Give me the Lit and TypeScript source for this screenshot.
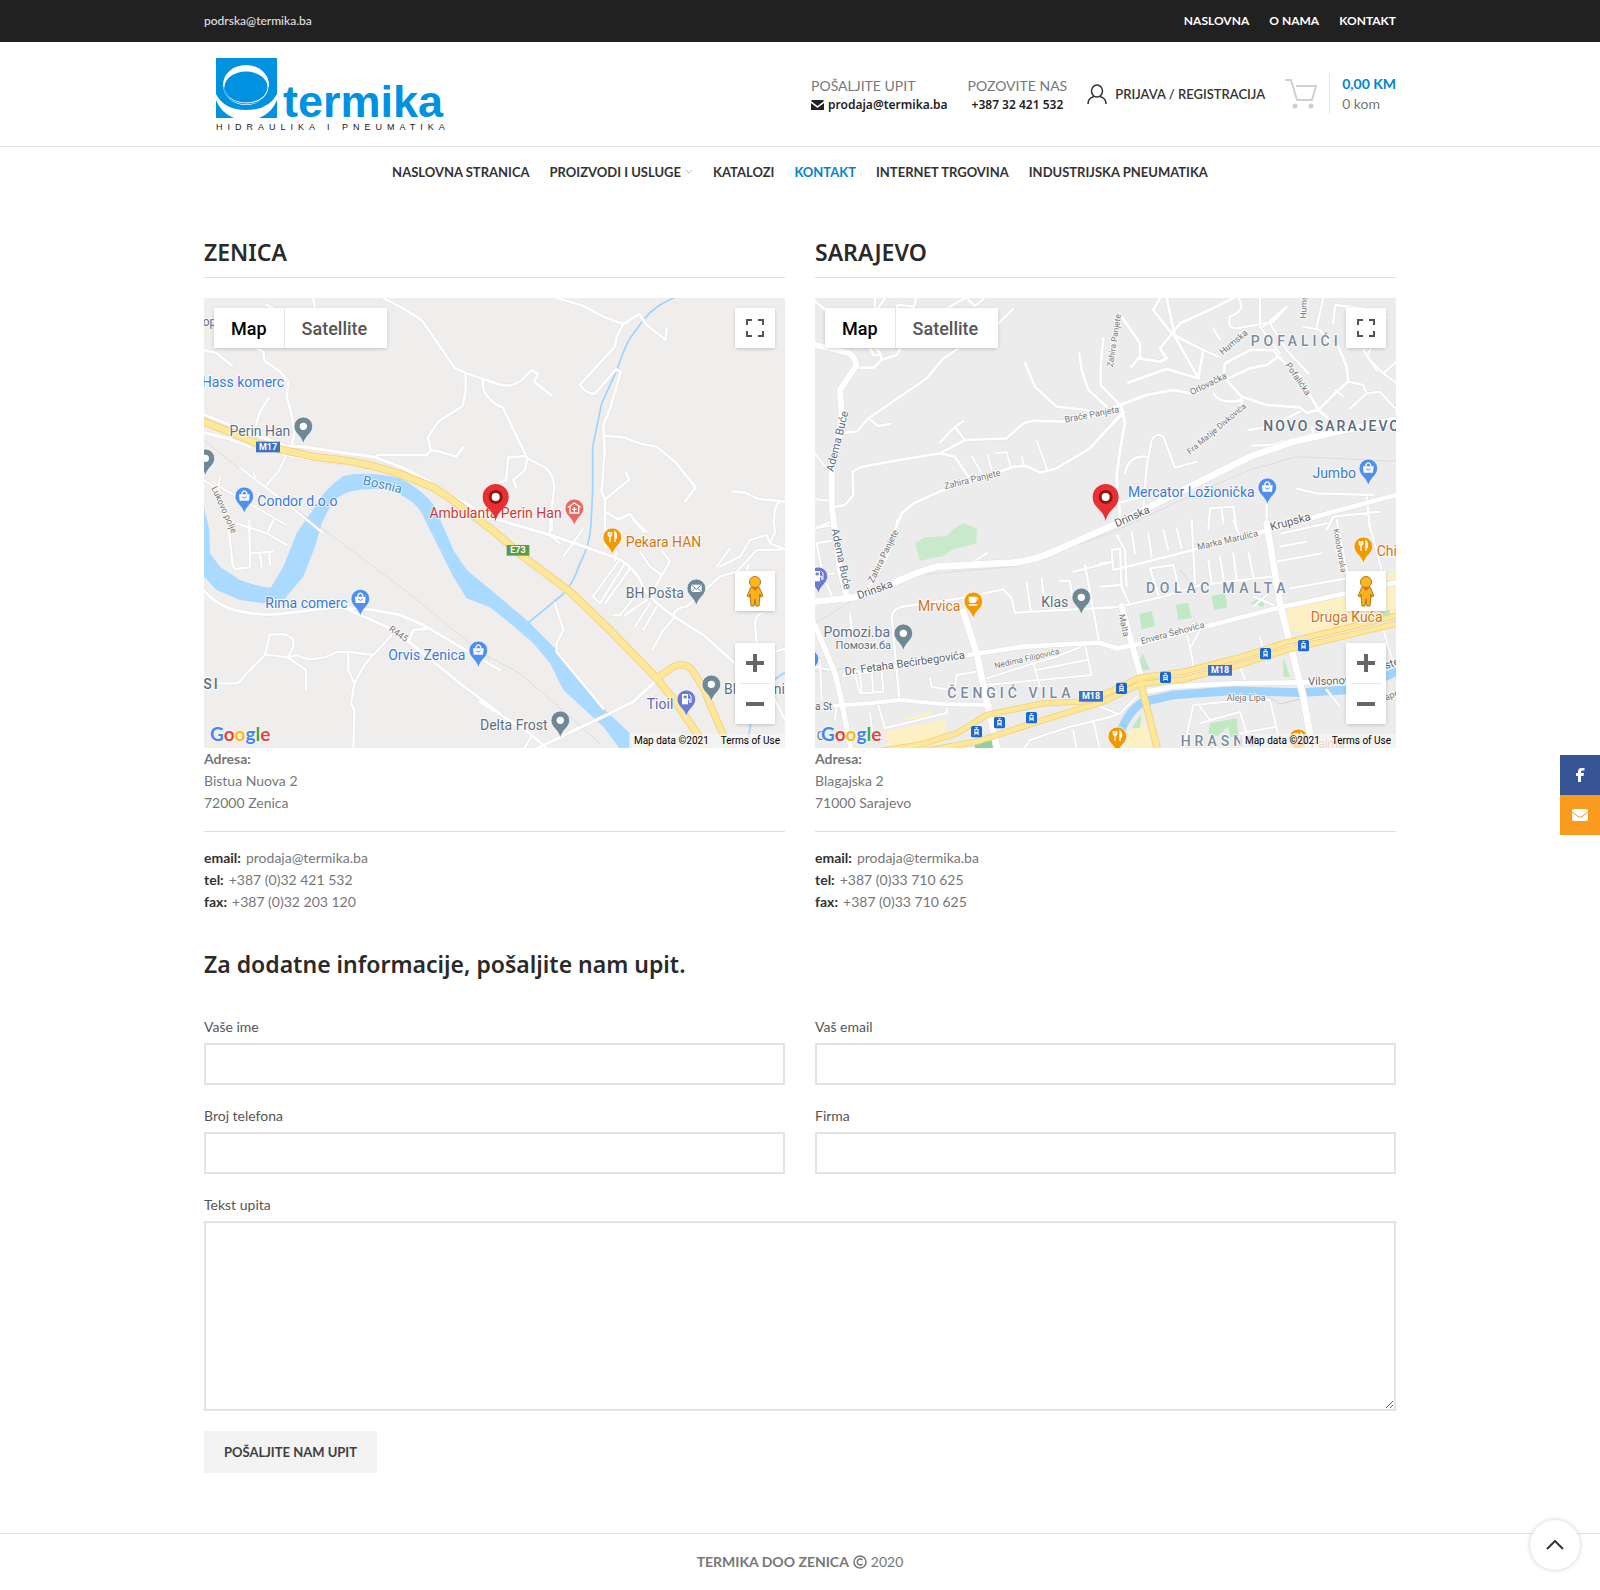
import { LitElement, html, svg, css } from "lit";
import { customElement, property } from "lit/decorators.js";

type Tile = "A" | "B" | "C" | "D";
type Stroke = [tile: Tile, width: number, paths: string];
type PinKind = "dot" | "bag" | "food" | "mail" | "fuel" | "cup" | "clinic";
type Pin = [tile: Tile, x: number, y: number, kind: PinKind];
interface Label {
  t: string;
  tile: Tile;
  x: number;
  y: number;
  c: string;
  size?: number;
  rot?: number;
  end?: boolean;
  track?: number;
  bold?: boolean;
}
interface MapData {
  view: string;
  land: string;
  areas: [Tile, string, string][];
  water: Stroke[];
  rail: Stroke[];
  minor: Stroke[];
  major: Stroke[];
  highway: Stroke[];
  pins: Pin[];
  shields: [Tile, number, number, string, string][];
  trams: [Tile, number, number][];
  labels: Label[];
}

const BLUE = "#3c78d8";
const SLATE = "#5b7083";
const GREY = "#757575";
const ORANGE = "#d57412";

/* Map drawings use three units per screen pixel, split into four tiles. */
const OFFSET: Record<Tile, [number, number]> = {
  A: [0, 0],
  B: [870, 0],
  C: [0, 690],
  D: [870, 690],
};

const ZENICA: MapData = {
  view: "12 24 1743 1350",
  land: "#efeeed",
  areas: [
    ["A", "#aadaff", "M12,650 L28,720 L30,790 L60,830 L120,870 Q190,895 213,892 L250,830 L290,730 L345,650 Q375,595 430,558 Q500,542 600,565 Q670,600 705,650 L730,710 L760,780 L800,840 L870,898 L980,990 L1060,1070 L1110,1130 L1210,1255 L1290,1330 L1297,1380 L1262,1380 L1210,1310 L1090,1200 L1050,1120 L1000,1060 L930,1000 L870,952 L800,925 L760,860 L720,780 L675,690 Q660,650 620,625 Q570,590 500,598 Q430,600 395,640 L365,700 L345,770 L310,860 L255,925 L190,940 L120,930 L50,900 L12,860 Z"],
  ],
  water: [
    ["B", 5, "M550,24 Q490,50 460,90 L420,145 Q400,180 383,235 L335,340 L308,470 V600 L303,700 Q302,760 268,825 Q250,880 220,912 L115,998"],
    ["D", 5, "M890,455 Q860,470 845,490 M782,610 L770,690"],
  ],
  rail: [
    ["A", 2, "M12,450 L110,530 L320,680 L640,920 L870,1110 M810,1070 L960,1150 L1200,1360"],
  ],
  minor: [
    ["A", 9, "M340,24 L344,54 M200,45 L230,60 M165,172 L190,185 L193,212 L240,245 L265,275 L260,320 L275,375 L283,430 L275,465 M207,323 L180,365 L168,405 M12,180 L50,190 L97,228 M550,24 L600,50 L665,90 L765,235 L800,250 L900,284 M797,250 V300 L788,348 L715,395 L684,442 L692,480 L680,495 L535,495 L525,502 M692,480 L720,485 L768,500 L790,472 M848,268 L850,300 Q870,335 900,350"],
    ["A", 7, "M260,492 L235,545 L200,585 M120,533 L260,640 L370,730 M40,575 L55,590 L60,560 M50,585 L260,705 M220,690 L205,720 M12,570 L60,600 M160,545 L165,560"],
    ["B", 9, "M200,24 L280,48 L340,80 L400,102 L448,72 L470,105 L527,150 L530,115 M400,102 L380,140 L375,170 L270,283 Q290,315 315,310 L378,238 L392,246 L362,350 L340,405 L344,480 L335,605 L345,630 V690 M340,437 L400,442 L455,462 L500,470 L555,515 L617,592 L585,635 M345,628 L417,570 L408,548 M0,272 Q60,305 100,265 L125,240 L145,252 L132,275 L185,316 M0,332 L38,352 L112,505 L165,532 Q195,555 192,600 L185,660 V720 M107,498 L55,502 L48,570 L15,583 M112,505 L105,540 L70,570 L78,590 M730,605 L765,608 L805,627 L890,635 M870,633 Q850,650 853,690 M345,665 L385,688 L420,672 L460,725"],
    ["C", 8, "M85,20 L98,135 L105,147 L150,142 L148,0 M150,100 L220,95 M180,100 L185,140 M208,98 L210,135 M110,10 L200,40 L260,75 M205,35 L220,0"],
    ["C", 10, "M12,212 Q60,265 130,275 Q200,290 270,278 L380,265 L430,262 L520,270 L600,285 L670,315 L780,380 L900,450 M430,262 L480,285 L560,320 L620,360 L780,490 L900,580 M640,330 L625,365 M640,330 L690,325"],
    ["C", 8, "M50,490 H115 L140,460 L195,405 L210,343 H250 Q290,350 278,385 L262,412 L195,403 M262,412 L290,405 L320,417 Q370,420 410,396 L450,396 L520,405 L575,345 M262,412 L318,450 V510 M445,398 V450 L463,490 L490,440 L518,405 M463,490 L453,550 L463,570 L460,690"],
    ["D", 10, "M-30,-18 L60,10 L180,45 L270,75 L390,118 Q440,150 460,200 Q480,240 560,295 L640,345 L735,430 M130,690 L350,585 L430,545 L495,485 M-30,415 M-30,545 L120,640 L175,690"],
    ["D", 8, "M195,250 L220,330 L200,370 V395 L340,565 M250,630 L350,585 M280,25 L220,110 M180,0 V45 L210,70 M345,0 V80 M385,125 L308,230 L325,245 M405,130 L330,250 M420,145 L345,250 M455,205 L390,285 L370,285 M470,240 L405,285 M480,250 L435,320 M500,260 L460,330 M555,290 L520,330 L487,390 M430,0 L470,35 M380,95 L375,120 M450,95 L480,140 L515,165 M515,90 L540,125 L495,200 M550,285 Q560,260 590,260 L690,170 L740,155 L800,90 L885,88 M680,140 L720,85 M690,140 L750,110 L780,60 L830,45 L840,70 L890,90 M850,0 L855,35 L840,70 M775,135 L770,160 M800,370 L795,305 Q800,280 820,280 M855,395 L890,385 M850,530 L890,610 M100,690 L130,640"],
    ["A", 10, "M12,374 L120,418 L250,465 M250,468 L310,470 L430,488 L520,500 L600,530 L690,575 L760,620 L850,670 M12,428 L90,447 L150,470 M250,492 L340,510 L430,520"],
  ],
  major: [],
  highway: [
    ["A", 20, "M0,390 L100,430 L170,460 L250,480 L340,500 L440,512 L520,528 L600,552 L700,592 L760,632 L830,685 L880,722 L970,800 L1110,905 L1230,1020 L1370,1165 L1430,1240 L1490,1330 L1540,1400"],
    ["D", 18, "M500,475 L550,440 Q590,425 610,455 L640,505 L680,600 L730,710"],
  ],
  pins: [
    ["A", 310, 409, "dot"],
    ["A", 16, 505, "dot"],
    ["A", 133, 619, "bag"],
    ["B", 253, 655, "clinic"],
    ["D", 367, 52, "food"],
    ["D", 619, 205, "mail"],
    ["C", 481, 236, "bag"],
    ["C", 835, 391, "bag"],
    ["D", 664, 493, "dot"],
    ["D", 589, 538, "fuel"],
    ["D", 211, 601, "dot"],
  ],
  shields: [
    ["A", 168, 455, "M17", "#3b72c4"],
    ["D", 50, 75, "E73", "#5e9a43"],
  ],
  trams: [],
  labels: [
    { t: "op", tile: "A", x: 8, y: 108, c: SLATE, size: 36 },
    { t: "Hass komerc", tile: "A", x: 252, y: 291, c: BLUE, end: true },
    { t: "Perin Han", tile: "A", x: 271, y: 438, c: SLATE, end: true },
    { t: "Bosnia", tile: "A", x: 487, y: 583, c: "#4b86c0", size: 39, rot: 13 },
    { t: "Condor d.o.o", tile: "A", x: 172, y: 648, c: BLUE },
    { t: "Ambulanta Perin Han", tile: "B", x: 215, y: 684, c: "#cc3a34", end: true },
    { t: "Lukovo polje", tile: "A", x: 34, y: 594, c: GREY, size: 27, rot: 66 },
    { t: "Rima comerc", tile: "C", x: 443, y: 264, c: BLUE, end: true },
    { t: "R445", tile: "C", x: 565, y: 331, c: GREY, size: 27, rot: 35 },
    { t: "Orvis Zenica", tile: "C", x: 796, y: 420, c: BLUE, end: true },
    { t: "SI", tile: "C", x: 10, y: 506, c: SLATE, track: 6, bold: true },
    { t: "Delta Frost", tile: "D", x: 173, y: 630, c: SLATE, end: true },
    { t: "Pekara HAN", tile: "D", x: 407, y: 81, c: ORANGE },
    { t: "BH Pošta", tile: "D", x: 582, y: 234, c: SLATE, end: true },
    { t: "Tioil", tile: "D", x: 550, y: 567, c: "#5a66b8", end: true },
    { t: "Bl", tile: "D", x: 702, y: 522, c: SLATE },
    { t: "ni", tile: "D", x: 885, y: 522, c: SLATE, end: true },
  ],
};

const SARAJEVO: MapData = {
  view: "15 24 1743 1350",
  land: "#ececec",
  areas: [
    ["C", "#c8eacb", "M315,70 L345,52 L410,48 L435,25 L460,10 L500,25 V70 L430,88 L400,108 L330,122 Z"],
    ["C", "#fef0c5", "M225,635 L410,597 L400,670 L240,700 Z M275,600 L365,572 L360,590 L290,600 Z"],
    ["D", "#fef0c5", "M560,265 L740,225 L890,150 V290 L640,345 L570,330 Z M80,640 L130,610 L180,700 H70 Z"],
    ["D", "#bfe8c3", "M118,283 L155,273 L165,318 L125,328 Z M228,255 L265,248 L275,293 L235,300 Z M335,228 L375,220 L382,262 L342,270 Z M450,250 L495,225 L490,262 Z M128,400 L150,450 L110,452 Z M550,410 L570,470 H550 Z M95,625 L125,580 L120,625 Z M330,610 L410,595 L415,650 L390,650 L385,620 L350,650 L325,640 Z M840,270 H870 V290 H840 Z"],
    ["C", "#8fd0a0", "M495,672 L545,660 L550,690 H495 Z"],
  ],
  water: [["D", 26, "M55,660 Q75,580 130,545 L220,525 L400,512 L600,518 L740,510 L800,495 L900,450"]],
  rail: [
    ["C", 2, "M15,310 L130,240 L320,165 L610,140 L900,40 L1180,-90 L1320,-150 L1460,-190 L1780,-175"],
    ["C", 2, "M15,455 L110,445"],
    ["D", 3, "M240,150 L290,210 M505,530 L540,552 L610,535"],
  ],
  minor: [
    ["A", 9, "M15,35 L45,58 M195,24 V54 M225,24 L205,54 M318,24 L312,50 L265,45 L255,60 M410,56 L465,24 M470,24 L495,48 L520,28 M608,58 L560,105 M180,174 L190,195 L212,195 L200,174 M212,195 L215,210 L190,233 H145 M215,210 L260,195 L272,175 M105,428 L140,425 L175,385 L350,265 L400,205 L450,172 M175,385 L205,408 L240,402"],
    ["A", 9, "M75,650 L105,645 L130,615 L128,545 L150,532 L255,512 L390,490 L465,450 L590,445 L640,400 L670,392 L770,395 L930,360 M390,458 L430,415 L460,393 M435,412 L465,450 M390,490 L435,500 L475,560 M645,218 L675,290 L740,350 L830,360 L850,370 M808,190 L815,240 L835,300 L890,350 M880,145 L872,225 V285 L930,345"],
    ["A", 10, "M255,720 L275,670 L310,640 L400,600 L570,545 L610,530 L650,528 L690,548 L740,535 L840,475 L940,365"],
    ["A", 7, "M680,452 L712,540 M485,498 L515,550 M532,492 L545,540 M557,490 L590,486 L600,525 M635,500 L642,525 M15,490 L50,535 M15,628 L60,632 M15,715 L70,705"],
    ["B", 10, "M0,370 L60,345 L140,315 L220,300 L270,310 L370,260 L425,320 L500,345 L600,352 L620,368 L655,360 L700,315 L745,275 L740,230 L715,170 M655,360 L690,390 M65,350 L75,400 L60,480 L50,560 L60,680 M0,440 L65,375 M85,278 L200,237 L295,265 L310,180 L250,150 L215,130 L160,60 L180,24 M295,265 L225,140 L210,70 L200,24 M180,175 L240,100 L350,50 L400,24 M180,175 L200,205 L180,215 L115,205 L95,230 M120,205 V160 L65,80 M385,265 L450,235 L500,225 L535,200 L600,260 L655,360 M370,260 L375,220 L450,180 L520,180 L535,200"],
    ["B", 8, "M425,320 V350 L400,375 M340,310 Q360,345 425,330 M310,180 L355,200 M340,115 L360,150 M415,24 Q440,60 390,80 Q380,115 410,115 L520,95 L560,50 M480,24 V110 M560,50 L490,110 M480,110 L540,190 M510,100 L560,180 L625,250 M610,110 L660,120 L690,160 M650,110 L670,24 M860,80 L820,160 L800,200 L850,250 L890,280 M850,250 L890,215 M700,100 L705,45 L790,55 M745,275 L790,285 L800,310 L750,355 M800,310 L840,305 L885,355 M705,300 L730,320 M790,180 L830,240"],
    ["B", 8, "M130,650 L140,530 L155,450 Q170,425 190,440 L225,533 L290,515 M75,550 Q85,495 140,500 M50,640 L130,620 M445,420 L510,410 L600,365 M455,467 L510,465 L640,430 L635,410 M590,595 L650,610 L820,615 M500,640 V720 M325,720 L330,655 L400,650 L410,720 M365,660 L370,700 M800,620 L810,720 M680,720 L700,680 L840,665"],
    ["C", 8, "M15,25 L65,5 M20,70 L40,170 L65,225 M20,70 L65,62 M20,170 L70,160 M262,0 L250,60 Q220,150 175,200 V220 M120,280 L125,330 M268,535 L245,290 Q250,262 290,258 L450,235 L580,208 L605,235 L615,278 L900,262 M650,185 L662,272 M695,175 L700,220 L735,270 M750,183 L780,182 L785,225 M790,155 L900,128 M825,135 L868,370 M490,125 L530,100"],
    ["C", 7, "M205,555 L225,625 L410,580 V555 M150,460 L155,520 L220,515 L215,450 M185,455 L190,518 M135,465 L150,520 M360,475 L365,500 L420,510 M435,500 L440,465 L500,455 M500,485 L670,430 L740,410 L825,375 L845,465 L530,495 M670,430 L690,500 M680,450 L830,420 M640,690 L660,660 L780,620 L900,590 M790,630 L800,690 M850,600 L870,690 M15,440 L60,450 M30,420 L35,540 M180,580 L190,660 M80,560 L75,600"],
    ["D", 8, "M0,265 L60,260 L190,230 L300,195 L515,170 M570,205 L740,175 M40,150 L280,90 L500,30 M40,150 L35,90 L60,85 L65,200 L90,255 M50,45 L75,90 L80,200 M95,35 L105,100 M145,40 L155,110 M190,30 L205,90 M230,25 L245,85 M275,0 L285,190 M325,120 L335,190 M360,110 L372,185 M400,100 L410,180 M445,95 L460,170 M150,145 L220,135 L240,220 M150,145 L175,225 M400,0 L420,50 M530,125 L665,100 M540,80 L620,65 M545,40 L680,10 M0,130 L40,125 M0,200 L60,195"],
    ["D", 7, "M260,340 L280,430 L270,480 M300,330 L270,385 M420,440 L435,480 M480,350 L500,430 M250,690 L280,555 L380,545 L510,540 L545,690 M0,600 L60,580 L110,530 M0,560 L50,580 M300,560 L330,600 M300,610 L420,575 L440,640 M420,640 L530,620 M620,560 Q640,590 625,620 M740,560 L745,520 M710,0 L740,150 M805,0 L845,150 M850,330 L880,430 M460,230 L520,255 M460,260 L500,225 M680,510 L720,560"],
  ],
  major: [
    ["A", 18, "M15,165 L60,175 L120,190 Q140,210 138,228 L90,300 L95,370 L90,430 L65,545 V650 L78,750 L90,840 L112,925"],
    ["C", 20, "M0,247 L130,232 L250,190 Q320,155 380,140 L610,128 Q680,120 740,90 L900,20 L1160,-110 L1320,-190 L1450,-235 L1580,-265 L1780,-305"],
    ["C", 14, "M105,465 L300,430 L475,405 L640,380 L868,368 L920,385 L975,375 L1410,262 L1470,250 L1780,182"],
    ["C", 20, "M460,275 L500,400 L530,545 L565,700"],
    ["C", 16, "M15,315 L75,460 L95,545 L125,700"],
    ["C", 12, "M75,557 L180,550 L270,540 L400,552 L540,555"],
    ["D", 18, "M65,258 L95,370 L125,480"],
    ["D", 20, "M500,10 L540,250 L575,390 L610,530 L640,700"],
    ["D", 14, "M140,515 L220,500 L400,490 L610,487 L740,487 M890,-75 L700,-25 L500,32 L440,48"],
  ],
  highway: [
    ["C", 15, "M200,695 L330,674 L440,640 L530,585 L700,550 L810,545 L900,515 L990,472 L1120,455 L1290,412 L1430,367 L1780,282"],
    ["C", 15, "M330,695 L500,665 L700,600 L880,545 L990,492 L1120,478 L1290,435 L1430,390 L1780,306"],
    ["D", 18, "M120,480 L140,560 L178,710"],
  ],
  pins: [
    ["B", 805, 535, "bag"],
    ["B", 502, 592, "bag"],
    ["C", 490, 244, "cup"],
    ["C", 814, 232, "dot"],
    ["C", 280, 340, "dot"],
    ["C", 25, 169, "fuel"],
    ["C", -2, 417, "bag"],
    ["D", 790, 79, "food"],
    ["D", 52, 649, "food"],
    ["D", 595, 655, "food"],
  ],
  shields: [
    ["C", 807, 513, "M18", "#3b72c4"],
    ["D", 324, 435, "M18", "#3b72c4"],
  ],
  trams: [
    ["C", 483, 618],
    ["C", 552, 591],
    ["C", 648, 576],
    ["D", 48, 488],
    ["D", 180, 455],
    ["D", 480, 384],
    ["D", 594, 360],
  ],
  labels: [
    { t: "Adema Buće", tile: "A", x: 70, y: 547, c: SLATE, size: 33, rot: -76 },
    { t: "Adema Buće", tile: "C", x: 64, y: 28, c: SLATE, size: 33, rot: 78 },
    { t: "Zahira Panjete", tile: "A", x: 405, y: 598, c: GREY, size: 27, rot: -14 },
    { t: "Zahira Panjete", tile: "C", x: 190, y: 190, c: GREY, size: 27, rot: -64 },
    { t: "Zahira Panjete", tile: "B", x: 38, y: 232, c: GREY, size: 25, rot: -81 },
    { t: "Braće Panjeta", tile: "A", x: 766, y: 398, c: GREY, size: 27, rot: -11 },
    { t: "Humska", tile: "B", x: 368, y: 196, c: GREY, size: 27, rot: -40 },
    { t: "Humska", tile: "B", x: 618, y: 86, c: GREY, size: 26, rot: -87 },
    { t: "Pofalićka", tile: "B", x: 555, y: 226, c: GREY, size: 27, rot: 55 },
    { t: "Orlovačka", tile: "B", x: 275, y: 316, c: GREY, size: 27, rot: -26 },
    { t: "Fra Matije Divkovića", tile: "B", x: 270, y: 494, c: GREY, size: 25, rot: -40 },
    { t: "Drinska", tile: "B", x: 50, y: 712, c: "#5f6368", size: 33, rot: -24 },
    { t: "Drinska", tile: "C", x: 146, y: 238, c: "#5f6368", size: 33, rot: -20 },
    { t: "Krupska", tile: "B", x: 514, y: 722, c: "#5f6368", size: 34, rot: -15 },
    { t: "Marka Marulića", tile: "D", x: 294, y: 90, c: GREY, size: 27, rot: -13 },
    { t: "Kolodvorska", tile: "D", x: 700, y: 28, c: GREY, size: 24, rot: 80 },
    { t: "Malta", tile: "D", x: 56, y: 284, c: GREY, size: 27, rot: 78 },
    { t: "Envera Šehovića", tile: "D", x: 125, y: 373, c: GREY, size: 27, rot: -15 },
    { t: "Nedima Filipovića", tile: "C", x: 556, y: 446, c: GREY, size: 25, rot: -13 },
    { t: "Dr. Fetaha Bećirbegovića", tile: "C", x: 106, y: 466, c: "#5f6368", size: 33, rot: -8 },
    { t: "Aleja Lipa", tile: "D", x: 380, y: 544, c: GREY, size: 27 },
    { t: "Vilsonovo", tile: "D", x: 625, y: 496, c: "#5f6368", size: 33, rot: -2 },
    { t: "ste", tile: "D", x: 858, y: 448, c: "#5f6368", size: 33, rot: -20 },
    { t: "ape", tile: "D", x: 858, y: 542, c: GREY, size: 27, rot: -22 },
    { t: "a St", tile: "C", x: 15, y: 570, c: "#5f6368", size: 30 },
    { t: "POFALIĆI", tile: "B", x: 452, y: 168, c: "#7b8aa0", track: 12, bold: true },
    { t: "NOVO SARAJEVO", tile: "B", x: 490, y: 423, c: "#5b6b7d", track: 6, bold: true },
    { t: "DOLAC MALTA", tile: "D", x: 138, y: 219, c: "#7b8aa0", track: 14, bold: true },
    { t: "ČENGIĆ VILA", tile: "C", x: 412, y: 535, c: "#7b8aa0", track: 12, bold: true },
    { t: "HRASNO", tile: "D", x: 242, y: 678, c: "#7b8aa0", track: 12, bold: true },
    { t: "Jumbo", tile: "B", x: 768, y: 564, c: BLUE, end: true },
    { t: "Mercator Ložionička", tile: "B", x: 464, y: 621, c: BLUE, end: true },
    { t: "Mrvica", tile: "C", x: 451, y: 273, c: ORANGE, end: true },
    { t: "Klas", tile: "C", x: 775, y: 261, c: SLATE, end: true },
    { t: "Pomozi.ba", tile: "C", x: 240, y: 350, c: SLATE, end: true },
    { t: "Помози.ба", tile: "C", x: 243, y: 387, c: SLATE, size: 33, end: true },
    { t: "Chi", tile: "D", x: 830, y: 108, c: ORANGE },
    { t: "Druga Kuća", tile: "D", x: 632, y: 306, c: ORANGE },
    { t: "Palma", tile: "D", x: 632, y: 684, c: ORANGE, size: 36 },
    { t: "C", tile: "C", x: 20, y: 660, c: SLATE, size: 36 },
  ],
};

const PIN_COLOR: Record<PinKind, string> = {
  dot: "#6f8895",
  mail: "#6f8895",
  bag: "#4f8ff0",
  food: "#f29900",
  cup: "#f29900",
  fuel: "#6e7ad0",
  clinic: "#ea6660",
};

const PIN_GLYPH: Record<PinKind, unknown> = {
  dot: svg`<circle r="11" fill="#fff" />`,
  mail: svg`<rect x="-16" y="-11" width="32" height="22" fill="#fff" /><path d="M-16,-11 L0,3 L16,-11 M-16,11 L-4,0 M16,11 L4,0" fill="none" stroke="#6f8895" stroke-width="3" />`,
  bag: svg`<path d="M-16,-6 H16 L14,13 H-14 Z" fill="#fff" /><path d="M-7,-6 V-11 Q0,-22 7,-11 V-6" fill="none" stroke="#fff" stroke-width="4" /><path d="M-7,1 Q0,10 7,1" fill="none" stroke="#4f8ff0" stroke-width="3" />`,
  food: svg`<path d="M-7,-16 V14 M-12,-16 V-6 Q-7,0 -2,-6 V-16 M8,14 V-16 Q14,-10 12,2 H8" fill="none" stroke="#fff" stroke-width="4" />`,
  cup: svg`<path d="M-14,-14 H10 V-2 Q8,5 2,5 H-6 Q-13,5 -14,-2 Z M-14,9 H12 V13 H-14 Z" fill="#fff" /><path d="M10,-11 Q18,-10 10,-2" fill="none" stroke="#fff" stroke-width="3" />`,
  fuel: svg`<path d="M-13,-16 H5 V15 H-13 Z" fill="#fff" /><path d="M-8,-11 H1 V-3 H-8 Z" fill="#6e7ad0" /><path d="M5,0 H10 V9 H14 V-10 L9,-15" fill="none" stroke="#fff" stroke-width="3" />`,
  clinic: svg`<path d="M-13,14 V-5 L-16,-5 L0,-16 L16,-5 H13 V14 Z" fill="none" stroke="#fff" stroke-width="4" /><path d="M0,-4 V10 M-7,3 H7" stroke="#fff" stroke-width="4" />`,
};

const at = (tile: Tile, x = 0, y = 0) =>
  `translate(${OFFSET[tile][0] + x} ${OFFSET[tile][1] + y})`;

const strokes = (list: Stroke[], color: string, extra = 0) =>
  list.map(
    ([tile, w, d]) =>
      svg`<path transform=${at(tile)} d=${d} fill="none" stroke=${color} stroke-width=${w + extra} stroke-linejoin="round" stroke-linecap="round" />`
  );

@customElement("store-map")
class StoreMap extends LitElement {
  @property({ attribute: false }) data: MapData = ZENICA;
  @property() name = "";

  static styles = css`
    :host {
      display: block;
      position: relative;
      height: 450px;
      overflow: hidden;
      font-family: Roboto, "Liberation Sans", sans-serif;
    }
    .canvas {
      display: block;
      width: 100%;
      height: 100%;
    }
    .label {
      paint-order: stroke;
      stroke: #fff;
      stroke-opacity: 0.75;
      stroke-width: 6px;
      stroke-linejoin: round;
      font-size: 42px;
    }
    .types {
      position: absolute;
      top: 10px;
      left: 10px;
      display: flex;
      background: #fff;
      box-shadow: 0 1px 4px -1px rgba(0, 0, 0, 0.3);
    }
    button {
      border: 0;
      padding: 0;
      background: #fff;
      font-family: inherit;
      cursor: pointer;
    }
    .type {
      height: 40px;
      padding: 0 20px 0 17px;
      font-size: 18px;
      font-weight: 500;
      color: #565656;
    }
    .type.on {
      padding-right: 17px;
      color: #000;
      border-right: 1px solid #e6e6e6;
    }
    .tool {
      position: absolute;
      right: 10px;
      width: 40px;
      height: 40px;
      display: grid;
      place-items: center;
      box-shadow: 0 1px 4px -1px rgba(0, 0, 0, 0.3);
    }
    .full {
      top: 10px;
    }
    .street {
      bottom: 137px;
    }
    .zoom {
      position: absolute;
      right: 10px;
      bottom: 24px;
      width: 40px;
      display: grid;
      background: #fff;
      box-shadow: 0 1px 4px -1px rgba(0, 0, 0, 0.3);
    }
    .zoom button {
      height: 40px;
      display: grid;
      place-items: center;
    }
    .rule {
      height: 1px;
      margin: 0 5px;
      background: #e6e6e6;
    }
    .brand {
      position: absolute;
      left: 6px;
      bottom: 0;
      font-family: Lato, sans-serif;
      font-size: 19px;
      line-height: 28px;
      font-weight: 700;
      text-decoration: none;
      text-shadow: 0 0 2px #fff, 0 0 2px #fff;
    }
    .b {
      color: #4285f4;
    }
    .r {
      color: #ea4335;
    }
    .y {
      color: #fbbc04;
    }
    .g {
      color: #34a853;
    }
    .legal {
      position: absolute;
      right: 0;
      bottom: 0;
      display: flex;
      gap: 12px;
      padding: 0 5px;
      background: rgba(245, 245, 245, 0.75);
      font-size: 10px;
      line-height: 14px;
      color: #000;
    }
    .legal a {
      color: inherit;
      text-decoration: none;
    }
  `;

  render() {
    const m = this.data;
    return html`
      <svg class="canvas" viewBox=${m.view} preserveAspectRatio="xMidYMid slice" role="img" aria-label=${this.name}>
        <rect x="-2000" y="-500" width="6000" height="3000" fill=${m.land} />
        ${m.areas.map(([tile, color, d]) => svg`<path transform=${at(tile)} d=${d} fill=${color} />`)}
        ${strokes(m.water, "#9fd3fb")} ${strokes(m.rail, "#d4d4d4")}
        ${strokes(m.minor, "#e1e1e1", 2)} ${strokes(m.minor, "#ffffff", -1)}
        ${strokes(m.major, "#dfdfdf", 3)} ${strokes(m.major, "#ffffff")}
        ${strokes(m.highway, "#f3cf7a", 4)} ${strokes(m.highway, "#fde798", -1)}
        ${m.trams.map(
          ([tile, x, y]) => svg`<g transform=${at(tile, x, y)}>
            <rect width="33" height="34" rx="5" fill="#1a67d2" />
            <path d="M12,5 H21 M16.5,5 V9 M9,28 L12,24 M24,28 L21,24" stroke="#fff" stroke-width="2" />
            <path d="M10,9 H23 V25 H10 Z M13,12 V17 H20 V12 Z M13,20 V22 H20 V20 Z" fill="#fff" fill-rule="evenodd" />
          </g>`
        )}
        ${m.labels.map(
          (l) => svg`<text class="label" transform=${`${at(l.tile, l.x, l.y)} rotate(${l.rot ?? 0})`}
            fill=${l.c} text-anchor=${l.end ? "end" : "start"}
            style=${`font-size:${l.size ?? 42}px;letter-spacing:${l.track ?? 0}px;font-weight:${l.bold ? 500 : 400}`}>${l.t}</text>`
        )}
        ${m.shields.map(
          ([tile, x, y, t, c]) => svg`<g transform=${at(tile, x, y)}>
            <rect width=${t === "E73" ? 68 : 72} height="32" fill=${c} />
            <text x=${t === "E73" ? 34 : 36} y="25" text-anchor="middle" font-size="27" font-weight="700" fill="#fff">${t}</text>
          </g>`
        )}
        ${m.pins.map(
          ([tile, x, y, kind]) => svg`<g transform=${at(tile, x, y)}>
            <path d="M0,53 C-6,26 -28,22 -28,0 A28,28 0 1 1 28,0 C28,22 6,26 0,53 Z" fill=${PIN_COLOR[kind]} stroke="#fff" stroke-width="2" />
            ${PIN_GLYPH[kind]}
          </g>`
        )}
        <g transform="translate(887 621)">
          <path d="M0,73 C-6,36 -39,34 -39,0 A39,39 0 1 1 39,0 C39,34 6,36 0,73 Z" fill="#ea2f32" />
          <circle r="21" fill="#8c1a17" />
          <circle r="12" fill="#fff" />
        </g>
      </svg>
      <div class="types">
        <button class="type on">Map</button>
        <button class="type">Satellite</button>
      </div>
      <button class="tool full" aria-label="Fullscreen">
        <svg width="18" height="18" viewBox="0 0 18 18" fill="none" stroke="#555" stroke-width="2">
          <path d="M1,6 V1 H6 M12,1 H17 V6 M17,12 V17 H12 M6,17 H1 V12" />
        </svg>
      </button>
      <button class="tool street" aria-label="Street view">
        <svg width="18" height="32" viewBox="0 0 18 32">
          <path d="M5,12 H13 L17,21 L14,22 V19 L13,31 H10 L9,24 L8,31 H5 L4,19 V22 L1,21 Z" fill="#f9b21d" stroke="#b5761a" />
          <path d="M5,12 H13 L9,16 Z" fill="#e8711a" />
          <circle cx="9" cy="7" r="5.5" fill="#fbb91e" stroke="#b5761a" />
        </svg>
      </button>
      <div class="zoom">
        <button aria-label="Zoom in">
          <svg width="18" height="18" viewBox="0 0 18 18"><path d="M7,0 H11 V7 H18 V11 H11 V18 H7 V11 H0 V7 H7 Z" fill="#666" /></svg>
        </button>
        <div class="rule"></div>
        <button aria-label="Zoom out">
          <svg width="18" height="18" viewBox="0 0 18 18"><path d="M0,7 H18 V11 H0 Z" fill="#666" /></svg>
        </button>
      </div>
      <a class="brand" href="#"><span class="b">G</span><span class="r">o</span><span class="y">o</span><span class="b">g</span><span class="g">l</span><span class="r">e</span></a>
      <div class="legal"><span>Map data ©2021</span><a href="#">Terms of Use</a></div>
    `;
  }
}

const OFFICES = [
  {
    city: "ZENICA",
    map: ZENICA,
    address: ["Bistua Nuova 2", "72000 Zenica"],
    contact: [
      ["email:", "prodaja@termika.ba"],
      ["tel:", "+387 (0)32 421 532"],
      ["fax:", "+387 (0)32 203 120"],
    ],
  },
  {
    city: "SARAJEVO",
    map: SARAJEVO,
    address: ["Blagajska 2", "71000 Sarajevo"],
    contact: [
      ["email:", "prodaja@termika.ba"],
      ["tel:", "+387 (0)33 710 625"],
      ["fax:", "+387 (0)33 710 625"],
    ],
  },
];

const FIELDS = [
  ["name", "Vaše ime", "text"],
  ["email", "Vaš email", "email"],
  ["phone", "Broj telefona", "tel"],
  ["company", "Firma", "text"],
];

@customElement("app-root")
class AppRoot extends LitElement {
  static styles = css`
    :host {
      display: block;
      background: #fff;
      color: #777;
      font-family: Lato, "Liberation Sans", sans-serif;
      font-size: 14px;
      line-height: 22px;
    }
    *,
    *::before,
    *::after {
      box-sizing: border-box;
    }
    a {
      color: inherit;
      text-decoration: none;
    }
    .wrap {
      max-width: 1222px;
      margin: 0 auto;
      padding: 0 15px;
    }
    .top {
      background: #212121;
      color: #fff;
      font-size: 12px;
    }
    .top .wrap {
      display: flex;
      justify-content: space-between;
      align-items: center;
      min-height: 42px;
    }
    .support {
      color: #e0e0e0;
      font-weight: 500;
    }
    .topnav {
      display: flex;
      gap: 20px;
      font-weight: 700;
    }
    .head {
      border-bottom: 1px solid #e4e4e4;
    }
    .head .wrap {
      display: flex;
      justify-content: space-between;
      align-items: center;
      min-height: 104px;
    }
    .logo {
      display: block;
      margin-left: 12px;
    }
    .logo svg {
      display: block;
    }
    .tools {
      display: flex;
      align-items: center;
      gap: 20px;
    }
    .info {
      padding-top: 2px;
      line-height: 19px;
    }
    .info .value {
      display: flex;
      align-items: center;
      justify-content: center;
      gap: 4px;
      font-family: "Noto Sans", "Open Sans", sans-serif;
      font-size: 12px;
      font-weight: 600;
      color: #222;
    }
    .account {
      display: flex;
      align-items: center;
      gap: 8px;
      font-size: 13px;
      font-weight: 600;
      color: #333;
    }
    .cart {
      display: flex;
      align-items: center;
      gap: 12px;
    }
    .sum {
      display: grid;
      border-left: 1px solid #e4e4e4;
      padding-left: 12px;
      line-height: 20px;
    }
    .sum strong {
      font-size: 14px;
      color: #0084ce;
    }
    .menu {
      display: flex;
      justify-content: center;
      align-items: center;
      gap: 20px;
      min-height: 50px;
      font-size: 13px;
      font-weight: 700;
      color: #333;
    }
    .menu a {
      display: flex;
      align-items: center;
      gap: 4px;
    }
    .menu .current {
      color: #0084ce;
    }
    main.wrap {
      padding-top: 40px;
      padding-bottom: 60px;
    }
    .columns {
      display: grid;
      grid-template-columns: 1fr 1fr;
      column-gap: 30px;
    }
    h3,
    h4 {
      margin: 0;
      font-family: "Noto Sans", "Open Sans", sans-serif;
      font-size: 23px;
      font-weight: 600;
      color: #2a2a2a;
    }
    h3 {
      line-height: 30px;
    }
    h4 {
      line-height: 32px;
      margin: 35px 0 36px;
    }
    .divider {
      height: 1px;
      border: 0;
      margin: 0;
      background: #dedede;
    }
    .city {
      padding-bottom: 10px;
      border-bottom: 1px solid #dedede;
      margin-bottom: 20px;
    }
    .lines {
      margin: 0;
    }
    .lines + .divider {
      margin: 17px 0 15px;
    }
    .lines b {
      margin-right: 5px;
      color: #333;
    }
    .lines .adr {
      color: #777;
    }
    .fields {
      row-gap: 20px;
      color: #555;
    }
    .field {
      display: grid;
      gap: 5px;
    }
    .wide {
      grid-column: 1 / -1;
    }
    input,
    textarea {
      width: 100%;
      height: 42px;
      margin: 0;
      padding: 0 15px;
      border: 2px solid #e3e3e3;
      background: #fff;
      font: inherit;
      color: inherit;
    }
    textarea {
      display: block;
      height: 190px;
      padding: 10px 15px;
      resize: vertical;
    }
    .send {
      height: 42px;
      margin-top: 20px;
      padding: 0 20px;
      border: 0;
      background: #f3f3f3;
      font-family: inherit;
      font-size: 13px;
      font-weight: 700;
      color: #3e3e3e;
      cursor: pointer;
    }
    footer {
      display: flex;
      justify-content: center;
      align-items: center;
      min-height: 57px;
      border-top: 1px solid #e4e4e4;
    }
    footer p {
      display: flex;
      align-items: center;
      gap: 4px;
      margin: 0;
    }
    .social {
      position: fixed;
      right: 0;
      top: 755px;
      display: grid;
    }
    .social a {
      display: grid;
      place-items: center;
      width: 40px;
      height: 40px;
    }
    .fb {
      background: #365493;
    }
    .mail {
      background: #f89a1e;
    }
    .up {
      position: fixed;
      right: 20px;
      bottom: 20px;
      display: grid;
      place-items: center;
      width: 50px;
      height: 50px;
      padding: 0;
      border: 0;
      border-radius: 50%;
      background: #fff;
      box-shadow: 0 0 5px rgba(0, 0, 0, 0.2);
      cursor: pointer;
    }
  `;

  render() {
    return html`
      <div class="top">
        <div class="wrap">
          <a class="support" href="#">podrska@termika.ba</a>
          <nav class="topnav"><a href="#">NASLOVNA</a><a href="#">O NAMA</a><a href="#">KONTAKT</a></nav>
        </div>
      </div>
      <header class="head">
        <div class="wrap">
          <a class="logo" href="#" aria-label="termika">
            <svg width="236" height="74" viewBox="0 0 236 74">
              <path d="M0,1 H61 V61 H0 Z" fill="#0092e0" />
              <path d="M0,37 Q8,53 30,53 Q53,53 61,37 V43 Q56,56 43,61 H18 Q5,56 0,43 Z" fill="#fff" />
              <ellipse cx="30" cy="28" rx="23" ry="20" fill="#fff" />
              <ellipse cx="30" cy="30" rx="21.500" ry="15.500" fill="#0092e0" />
              <path d="M8,30 A22,16.500 0 0 0 53,30" fill="none" stroke="#0092e0" stroke-width="1" />
              <text x="67" y="60" font-family="Liberation Sans" font-size="45" font-weight="700" fill="#0092e0">termika</text>
              <text x="0" y="73" font-family="Liberation Sans" font-size="9" letter-spacing="5" fill="#222">HIDRAULIKA I PNEUMATIKA</text>
            </svg>
          </a>
          <div class="tools">
            <div class="info">
              <div>POŠALJITE UPIT</div>
              <a class="value" href="#">
                <svg width="13" height="10" viewBox="0 0 13 10"><path d="M1,0 H12 L13,1 L6.500,6 L0,1 Z M0,3 L6.500,8 L13,3 V10 H0 Z" fill="#222" /></svg>
                prodaja@termika.ba
              </a>
            </div>
            <div class="info">
              <div>POZOVITE NAS</div>
              <a class="value" href="#">+387 32 421 532</a>
            </div>
            <a class="account" href="#">
              <svg width="20" height="20" viewBox="0 0 20 20" fill="none" stroke="#333" stroke-width="1.500">
                <ellipse cx="10" cy="7" rx="5.500" ry="6" />
                <path d="M1,20 Q1,14 7,12.500 M13,12.500 Q19,14 19,20" />
              </svg>
              PRIJAVA / REGISTRACIJA
            </a>
            <a class="cart" href="#">
              <svg width="32" height="30" viewBox="0 0 32 30" fill="none" stroke="#d0d0d0" stroke-width="2">
                <path d="M0,1 H6 L12,21 H27 L31,7 H11" />
                <circle cx="10" cy="27" r="2.500" fill="#d0d0d0" stroke="none" />
                <circle cx="26" cy="27" r="2.500" fill="#d0d0d0" stroke="none" />
              </svg>
              <span class="sum"><strong>0,00 KM</strong><span>0 kom</span></span>
            </a>
          </div>
        </div>
      </header>
      <nav class="menu wrap">
        <a href="#">NASLOVNA STRANICA</a>
        <a href="#">
          PROIZVODI I USLUGE
          <svg width="8" height="6" viewBox="0 0 8 6" fill="none" stroke="#bbb"><path d="M1,1 L4,4 L7,1" /></svg>
        </a>
        <a href="#">KATALOZI</a>
        <a class="current" href="#">KONTAKT</a>
        <a href="#">INTERNET TRGOVINA</a>
        <a href="#">INDUSTRIJSKA PNEUMATIKA</a>
      </nav>
      <main class="wrap">
        <div class="columns">
          ${OFFICES.map(
            (o) => html`<section>
              <h3 class="city">${o.city}</h3>
              <store-map .data=${o.map} name=${o.city}></store-map>
              <p class="lines"><b class="adr">Adresa:</b>${o.address.map((l) => html`<br />${l}`)}</p>
              <hr class="divider" />
              <p class="lines">
                ${o.contact.map(([k, v], i) => html`${i ? html`<br />` : ""}<b>${k}</b>${v}`)}
              </p>
            </section>`
          )}
        </div>
        <h4>Za dodatne informacije, pošaljite nam upit.</h4>
        <form>
          <div class="columns fields">
            ${FIELDS.map(
              ([id, label, type]) => html`<div class="field">
                <label for=${id}>${label}</label>
                <input id=${id} type=${type} />
              </div>`
            )}
            <div class="field wide">
              <label for="message">Tekst upita</label>
              <textarea id="message"></textarea>
            </div>
          </div>
          <button class="send" type="button">POŠALJITE NAM UPIT</button>
        </form>
      </main>
      <footer>
        <p>
          <b>TERMIKA DOO ZENICA</b>
          <svg width="14" height="14" viewBox="0 0 14 14" fill="none" stroke="#777" stroke-width="1.500">
            <circle cx="7" cy="7" r="6" />
            <path d="M9.500,5 A3,3 0 1 0 9.500,9" />
          </svg>
          2020
        </p>
      </footer>
      <div class="social">
        <a class="fb" href="#" aria-label="Facebook">
          <svg width="9" height="14" viewBox="0 0 9 14"><path d="M2,14 V8 H0 V5 H2 V3.500 Q2,0 5.500,0 H8.500 V2.500 H6.500 Q5,2.500 5,4 V5 H8 L7.500,8 H5 V14 Z" fill="#fff" /></svg>
        </a>
        <a class="mail" href="#" aria-label="Email">
          <svg width="16" height="12" viewBox="0 0 16 12"><rect width="16" height="12" rx="2" fill="#fff" /><path d="M0,3 L6,7.500 Q8,9 10,7.500 L16,3" fill="none" stroke="#f89a1e" /></svg>
        </a>
      </div>
      <button class="up" aria-label="Na vrh">
        <svg width="18" height="10" viewBox="0 0 18 10" fill="none" stroke="#333" stroke-width="2"><path d="M1,9 L9,1 L17,9" /></svg>
      </button>
    `;
  }
}
